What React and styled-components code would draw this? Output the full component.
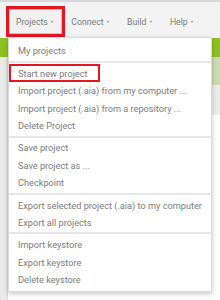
import React from "react";
import styled, { createGlobalStyle } from "styled-components";

const Global = createGlobalStyle`
  html, body { margin: 0; padding: 0; background: #fff; }
  body { font-family: Roboto, "Noto Sans", sans-serif; width: 220px; height: 300px; overflow: hidden; }
  * { box-sizing: border-box; }
`;

const Page = styled.div`
  position: relative;
  width: 220px;
  height: 300px;
  overflow: hidden;
  display: flex;
  flex-direction: column;
`;

const TopLine = styled.div`
  height: 2px;
  background: #d8d8d8;
`;

const Toolbar = styled.div`
  height: 36px;
  background: #f3f3f3;
  display: flex;
  align-items: flex-start;
  padding: 7px 0 0 9px;
`;

const MenuButton = styled.div`
  height: 25px;
  display: flex;
  align-items: center;
  padding: 0 8px 0 6px;
  margin-right: 2px;
  font-size: 8.7px;
  color: #7a7a7a;
  border: 1px solid ${(p) => (p.$active ? "#b9c6dc" : "transparent")};
  background: ${(p) => (p.$active ? "#f1f1f1" : "transparent")};
  outline: ${(p) => (p.$active ? "3px solid #e4161f" : "none")};
`;

const Caret = styled.span`
  width: 0;
  height: 0;
  margin-left: 3.5px;
  margin-top: 1px;
  border-left: 1.8px solid transparent;
  border-right: 1.8px solid transparent;
  border-top: 2.3px solid #8a8a8a;
`;

const Banner = styled.div`
  height: 19px;
  background: #8bc220;
`;

const Workspace = styled.div`
  flex: 1;
  display: flex;
`;

const LeftRail = styled.div`
  width: 8px;
  background: #eaeaea;
  border-right: 1px solid #d9d9d9;
`;

const Main = styled.div`
  flex: 1;
  display: flex;
  flex-direction: column;
  background: #fff;
`;

const SubBanner = styled.div`
  height: 28px;
  background: #c9dcae;
`;

const GrayStrip = styled.div`
  height: 30px;
  background: #ececec;
`;

const Dropdown = styled.div`
  position: absolute;
  left: 8px;
  top: 37px;
  width: 204px;
  background: #fff;
  border: 1px solid #dadada;
  box-shadow: 0 2px 5px rgba(0, 0, 0, 0.22);
  padding: 4.2px 0 2.7px;
  display: flex;
  flex-direction: column;
`;

const Item = styled.div`
  height: 17.5px;
  display: flex;
  align-items: center;
  padding-left: 9px;
  font-size: 9.2px;
  color: #7c7c7c;
  white-space: nowrap;
`;

const Label = styled.span`
  position: relative;
  &::before {
    content: ${(p) => (p.$marked ? '""' : "none")};
    position: absolute;
    left: -9px;
    right: -12px;
    top: -4px;
    bottom: -3px;
    border: 2.5px solid #e4161f;
  }
`;

const Separator = styled.div`
  height: 2px;
  margin: 1.2px 0 1.5px;
  background: #e6e6e6;
`;

const menus = ["Projects", "Connect", "Build", "Help"];

const groups = [
  ["My projects"],
  [
    "Start new project",
    "Import project (.aia) from my computer ...",
    "Import project (.aia) from a repository ...",
    "Delete Project",
  ],
  ["Save project", "Save project as ...", "Checkpoint"],
  ["Export selected project (.aia) to my computer", "Export all projects"],
  ["Import keystore", "Export keystore", "Delete keystore"],
];

export default function App() {
  return (
    <>
      <Global />
      <Page>
        <TopLine />
        <Toolbar>
          {menus.map((m, i) => (
            <MenuButton key={m} $active={i === 0}>
              {m}
              <Caret />
            </MenuButton>
          ))}
        </Toolbar>
        <Banner />
        <Workspace>
          <LeftRail />
          <Main>
            <SubBanner />
            <GrayStrip />
          </Main>
        </Workspace>
        <Dropdown>
          {groups.map((g, gi) => (
            <React.Fragment key={gi}>
              {gi > 0 && <Separator />}
              {g.map((label) => (
                <Item key={label}>
                  <Label $marked={label === "Start new project"}>{label}</Label>
                </Item>
              ))}
            </React.Fragment>
          ))}
        </Dropdown>
      </Page>
    </>
  );
}
